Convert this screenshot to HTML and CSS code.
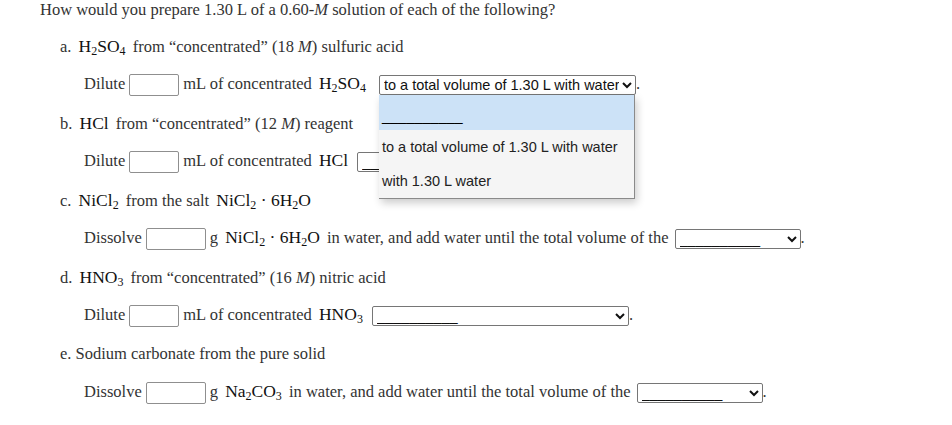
FILE: index.html
```html
<!DOCTYPE html>
<html>
<head>
<title>Preparing Solutions</title>
<link rel="stylesheet" href="styles.css">
</head>
<body>

<div class="prompt">How would you prepare 1.30 L of a 0.60-<i>M</i> solution of each of the following?</div>

<div class="parts">
    <div class="part-title">a. <span class="chem">H<sub>2</sub>SO<sub>4</sub></span> from “concentrated” (18 <i>M</i>) sulfuric acid</div>
    <div class="answer-row">
        Dilute<input type="text" class="amount-input">mL of concentrated <span class="chem">H<sub>2</sub>SO<sub>4</sub></span><span class="select-wrap"><select class="volume-select wide">
                <option>__________</option>
                <option selected>to a total volume of 1.30 L with water</option>
                <option>with 1.30 L water</option>
            </select><div class="dropdown">
                <div class="dropdown-item active">__________</div>
                <div class="dropdown-item">to a total volume of 1.30 L with water</div>
                <div class="dropdown-item">with 1.30 L water</div>
            </div></span>.
    </div>

    <div class="part-title">b. <span class="chem">HCl</span> from “concentrated” (12 <i>M</i>) reagent</div>
    <div class="answer-row">
        Dilute<input type="text" class="amount-input">mL of concentrated <span class="chem">HCl</span><select class="volume-select wide">
            <option>__________</option>
            <option>to a total volume of 1.30 L with water</option>
            <option>with 1.30 L water</option>
        </select>.
    </div>

    <div class="part-title">c. <span class="chem">NiCl<sub>2</sub></span> from the salt <span class="chem">NiCl<sub>2</sub> · 6H<sub>2</sub>O</span></div>
    <div class="answer-row">
        Dissolve<input type="text" class="amount-input long">g <span class="chem">NiCl<sub>2</sub> · 6H<sub>2</sub>O</span> in water, and add water until the total volume of the<select class="volume-select narrow">
            <option>__________</option>
            <option>solution is 1.30 L</option>
            <option>water is 1.30 L</option>
        </select>.
    </div>

    <div class="part-title">d. <span class="chem">HNO<sub>3</sub></span> from “concentrated” (16 <i>M</i>) nitric acid</div>
    <div class="answer-row">
        Dilute<input type="text" class="amount-input">mL of concentrated <span class="chem">HNO<sub>3</sub></span><select class="volume-select wide">
            <option>__________</option>
            <option>to a total volume of 1.30 L with water</option>
            <option>with 1.30 L water</option>
        </select>.
    </div>

    <div class="part-title">e. Sodium carbonate from the pure solid</div>
    <div class="answer-row">
        Dissolve<input type="text" class="amount-input long">g <span class="chem">Na<sub>2</sub>CO<sub>3</sub></span> in water, and add water until the total volume of the<select class="volume-select narrow">
            <option>__________</option>
            <option>solution is 1.30 L</option>
            <option>water is 1.30 L</option>
        </select>.
    </div>
</div>

</body>
</html>
```

FILE: styles.css
```css
body {
    font-family: "Liberation Serif", "Times New Roman", serif;
    font-size: 16.5px;
    color: #333;
    background-color: #fff;
    margin: 0;
    padding: 0 0 0 40px;
}
.prompt {
    height: 20px;
    line-height: 20px;
    margin-bottom: 16px;
}
.parts {
    margin-left: 20px;
}
.part-title {
    height: 20px;
    line-height: 20px;
    margin-bottom: 16px;
}
.answer-row {
    height: 22px;
    line-height: 22px;
    margin-bottom: 19px;
    padding-left: 24px;
    white-space: nowrap;
}
.chem {
    font-size: 17.5px;
    color: #111;
    margin: 0 3px;
}
.chem sub {
    font-size: 12px;
    vertical-align: -3px;
    line-height: 0;
}
.amount-input {
    box-sizing: border-box;
    width: 50px;
    height: 22px;
    margin: 0 4px;
    padding: 0 4px;
    border: 1px solid #8f8f8f;
    border-radius: 2px;
    font-size: 14px;
    vertical-align: middle;
}
.amount-input.long {
    width: 60px;
}
.select-wrap {
    position: relative;
    display: inline-block;
    vertical-align: middle;
    height: 20px;
    margin-left: 10px;
}
.volume-select {
    box-sizing: border-box;
    height: 20px;
    margin-left: 6px;
    padding: 0;
    border: 1px solid #767676;
    border-radius: 2px;
    background-color: #fff;
    font-family: "Liberation Sans", Arial, sans-serif;
    font-size: 14.5px;
    color: #111;
    vertical-align: middle;
}
.select-wrap .volume-select {
    margin-left: 0;
    vertical-align: top;
}
.volume-select.wide {
    width: 257px;
}
.volume-select.narrow {
    width: 126px;
}
.dropdown {
    position: absolute;
    top: 20px;
    left: 0;
    width: 255px;
    background-color: #f5f5f5;
    border-right: 1px solid #8a8a8a;
    border-bottom: 1px solid #8a8a8a;
    box-shadow: 2px 4px 8px rgba(0, 0, 0, 0.2);
    font-family: "Liberation Sans", Arial, sans-serif;
    font-size: 14.5px;
    color: #222;
    white-space: nowrap;
    z-index: 10;
}
.dropdown-item {
    height: 34px;
    line-height: 34px;
    padding-left: 3px;
}
.dropdown-item.active {
    height: 35px;
    line-height: 42px;
    background-color: #cce2f7;
    color: #000;
}
```
